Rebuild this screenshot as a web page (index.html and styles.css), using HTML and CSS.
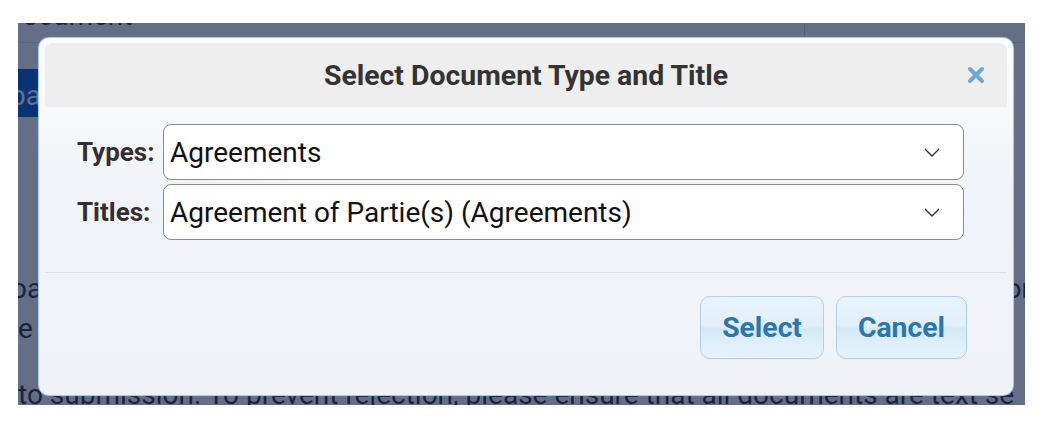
FILE: index.html
```html
<!DOCTYPE html>
<html lang="en">
<head>
<meta charset="utf-8">
<title>Select Document Type and Title</title>
<link rel="stylesheet" href="styles.css">
</head>
<body>
<div class="page">
  <div class="bg-header">
    <div class="bg-header-main"><span class="bg-title">Document</span></div>
    <div class="bg-header-side"></div>
  </div>
  <div class="bg-btn">pa</div>
  <div class="bg-line bg-line-1"><span>oa</span><span>or</span></div>
  <div class="bg-line bg-line-2"><span>e</span></div>
  <div class="bg-line bg-line-3"><span>to submission. To prevent rejection, please ensure that all documents are text se</span></div>

  <div class="dialog" role="dialog" aria-labelledby="dlg-title">
    <div class="dialog-titlebar">
      <span id="dlg-title" class="dialog-title">Select Document Type and Title</span>
      <span class="dialog-close" aria-label="Close">
        <svg width="18" height="18" viewBox="0 0 18 18"><path d="M3 3 L15 15 M15 3 L3 15" stroke="#6ea8d7" stroke-width="4" stroke-linecap="round" fill="none"/></svg>
      </span>
    </div>
    <div class="dialog-body">
      <div class="form-row">
        <span class="form-label">Types:</span>
        <div class="select-box">
          <span class="select-value">Agreements</span>
          <svg class="chev" width="16" height="9" viewBox="0 0 16 9"><polyline points="1,1 8,8 15,1" fill="none" stroke="#333" stroke-width="1.4"/></svg>
        </div>
      </div>
      <div class="form-row">
        <span class="form-label">Titles:</span>
        <div class="select-box">
          <span class="select-value">Agreement of Partie(s) (Agreements)</span>
          <svg class="chev" width="16" height="9" viewBox="0 0 16 9"><polyline points="1,1 8,8 15,1" fill="none" stroke="#333" stroke-width="1.4"/></svg>
        </div>
      </div>
    </div>
    <div class="dialog-sep"></div>
    <div class="dialog-buttons">
      <button class="btn">Select</button>
      <button class="btn">Cancel</button>
    </div>
  </div>
</div>
</body>
</html>
```

FILE: styles.css
```css
* { box-sizing: border-box; }

html, body {
  margin: 0;
  padding: 0;
  background: #ffffff;
}

body {
  font-family: Roboto, "Liberation Sans", Arial, sans-serif;
  padding: 23px 26px 0 18px;
}

.page {
  position: relative;
  width: 1007px;
  height: 382px;
  overflow: hidden;
  background: #646f87;
  color: #1b2140;
}

.bg-header {
  display: flex;
  height: 20px;
  border-bottom: 1px solid #5b657c;
}

.bg-header-main {
  width: 787px;
  border-right: 1px solid #56607a;
  overflow: visible;
}

.bg-title {
  display: block;
  margin-top: -23px;
  font-size: 28px;
  line-height: 32px;
  color: #1b2140;
  text-indent: -14px;
}

.bg-btn {
  margin-top: 26px;
  width: 26px;
  height: 48px;
  background: #0b3372;
  color: #5f6f96;
  font-size: 28px;
  line-height: 54px;
  text-indent: -8px;
  overflow: hidden;
}

.bg-line {
  display: flex;
  justify-content: space-between;
  font-size: 28px;
  line-height: 40px;
  white-space: nowrap;
}

.bg-line-1 { margin-top: 152px; }
.bg-line-1 span:first-child { margin-left: -7px; }
.bg-line-1 span:last-child { margin-right: -6px; }
.bg-line-3 { margin-top: 26px; }

.dialog {
  position: absolute;
  left: 20px;
  top: 14px;
  width: 976px;
  height: 359px;
  padding: 5px 6px 6px;
  border: 1px solid #a9c8e2;
  border-radius: 11px;
  background: linear-gradient(to bottom, #fbfcfd 0, #f6f8fa 80px, #f0f4f8 150px, #eff3f7 100%);
  box-shadow: 0 0 1px rgba(160, 200, 230, 0.6);
}

.dialog-titlebar {
  position: relative;
  height: 64px;
  background: #eeeeee;
  border-radius: 8px 8px 0 0;
  display: flex;
  align-items: center;
  justify-content: center;
}

.dialog-title {
  font-size: 28.4px;
  font-weight: 700;
  color: #333333;
}

.dialog-close {
  position: absolute;
  right: 22px;
  top: 50%;
  width: 18px;
  height: 18px;
  margin-top: -9px;
  display: flex;
}

.dialog-body {
  padding: 17px 43px 0 32px;
  display: flex;
  flex-direction: column;
  gap: 4px;
}

.form-row {
  display: flex;
  align-items: center;
}

.form-label {
  width: 86px;
  flex: none;
  font-size: 26px;
  font-weight: 700;
  color: #362d33;
}

.select-box {
  flex: 1;
  height: 56px;
  display: flex;
  align-items: center;
  justify-content: space-between;
  padding: 0 23px 0 6px;
  background: #ffffff;
  border: 1px solid #8c8c8c;
  border-radius: 8px;
}

.select-value {
  font-size: 28px;
  color: #111111;
}

.chev { flex: none; }

.dialog-sep {
  margin-top: 32px;
  height: 1px;
  background: #dcdfe3;
}

.dialog-buttons {
  display: flex;
  justify-content: flex-end;
  gap: 12px;
  padding: 23px 40px 0 0;
}

.btn {
  height: 63px;
  padding: 0 21px;
  font-family: Roboto, "Liberation Sans", Arial, sans-serif;
  font-size: 28.3px;
  font-weight: 700;
  color: #2b77ac;
  border: 1px solid #aed0ea;
  border-radius: 10px;
  background: linear-gradient(to bottom, #e9f4fc 0%, #e2f0fa 46%, #d3e8f6 52%, #dceef9 70%, #e8f3fc 100%);
  cursor: pointer;
}
```
